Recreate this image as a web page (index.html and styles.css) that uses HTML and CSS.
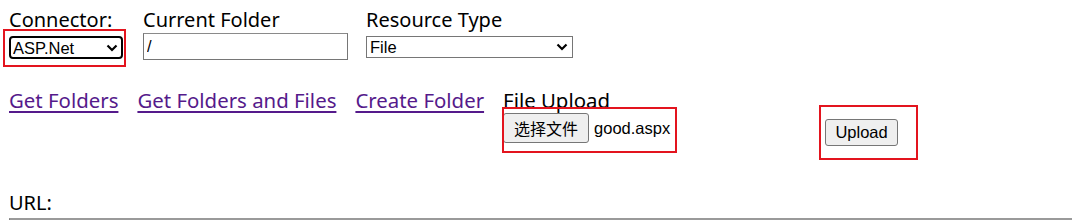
FILE: index.html
```html
<!DOCTYPE html>
<html lang="en">
<head>
    <meta charset="UTF-8">
    <title>FCKeditor - Connectors Tests</title>
    <link rel="stylesheet" href="styles.css">
</head>
<body>
<div class="page">
    <div class="row top">
        <div class="field f-conn">
            <div class="lbl">Connector:</div>
            <div class="mark mark-conn selbox">
                <select class="sel sel-conn">
                    <option>ASP.Net</option>
                </select>
                <svg class="chev" width="12" height="8" viewBox="0 0 12 8"><path d="M1.5 1.5 L6 6 L10.5 1.5" fill="none" stroke="#000" stroke-width="2.2"/></svg>
            </div>
        </div>
        <div class="field f-folder">
            <div class="lbl">Current Folder</div>
            <input class="txt" type="text" value="/">
        </div>
        <div class="field f-type">
            <div class="lbl">Resource Type</div>
            <div class="selbox">
                <select class="sel sel-type">
                    <option>File</option>
                </select>
                <svg class="chev" width="12" height="8" viewBox="0 0 12 8"><path d="M1.5 1.5 L6 6 L10.5 1.5" fill="none" stroke="#000" stroke-width="2.2"/></svg>
            </div>
        </div>
    </div>

    <div class="row actions">
        <a class="lnk" href="#">Get Folders</a>
        <a class="lnk" href="#">Get Folders and Files</a>
        <a class="lnk" href="#">Create Folder</a>
        <div class="upload">
            <div class="lbl">File Upload</div>
            <div class="mark mark-file">
                <button class="btn btn-file" type="button">选择文件</button>
                <span class="fname">good.aspx</span>
            </div>
        </div>
        <div class="mark mark-send">
            <button class="btn btn-send" type="button">Upload</button>
        </div>
    </div>

    <div class="lbl url">URL:</div>
    <textarea class="result"></textarea>
</div>
</body>
</html>
```

FILE: styles.css
```css
html, body { margin:0; padding:0; background:#fff; }
body { font-family:"Noto Sans", "Noto Sans CJK SC", sans-serif; font-size:20px; color:#000; overflow:hidden; }
.page { padding:8px 0 0 9px; }
.lbl { line-height:24px; height:24px; white-space:nowrap; }

.row { display:flex; }
.top { height:80px; }
.field { display:flex; flex-direction:column; }
.f-conn { width:114px; }
.f-folder { width:205px; margin-left:20px; }
.f-type { width:207px; margin-left:18px; }

.selbox { position:relative; margin-top:4px; }
.chev { position:absolute; right:5px; top:50%; margin-top:-4px; pointer-events:none; }
.sel { -webkit-appearance:none; appearance:none; display:block; font-family:"Liberation Sans", Arial, sans-serif; font-size:16.5px; color:#000; background:#fff; box-sizing:border-box; margin:0; }
.sel-conn { width:114px; height:23px; border:2px solid #000; border-radius:4px; padding:0 2px; }
.sel-type { width:207px; height:22px; border:1px solid #767676; border-radius:0; padding:0 3px; }
.txt { box-sizing:border-box; width:205px; height:27px; margin:1px 0 0 0; border:1px solid #767676; border-top-color:#8a8a8a; padding:0 3px; font-family:"Liberation Sans", Arial, sans-serif; font-size:16.5px; color:#000; }

.mark { position:relative; }
.mark::after { content:""; position:absolute; border:2px solid #e3141e; pointer-events:none; }
.mark-conn::after { left:-6px; right:-3px; top:-7px; bottom:-8px; }
.mark-file::after { left:-1px; right:-6px; top:-6px; bottom:-10px; }
.mark-send::after { left:-6px; right:-20px; top:-11px; bottom:-14px; }

.actions { align-items:flex-start; font-size:20.4px; }
.lnk { color:#551a8b; text-decoration:underline; text-underline-offset:3px; line-height:24px; margin-right:19px; white-space:nowrap; }
.upload { width:322px; display:flex; flex-direction:column; }
.mark-file { display:flex; align-items:center; margin-top:1px; width:168px; }
.btn { font-family:"Liberation Sans", Arial, "Noto Sans CJK SC", sans-serif; font-size:16.5px; color:#000; background:#efefef; border:1px solid #767676; border-radius:3px; margin:0; box-sizing:border-box; }
.btn-file { width:86px; height:30px; padding:0; font-family:"Noto Sans CJK SC", sans-serif; font-size:16px; }
.fname { font-family:"Liberation Sans", Arial, sans-serif; font-size:16.5px; margin-left:5px; }
.mark-send { margin-top:28px; }
.btn-send { width:73px; height:27px; padding:0; }

.url { margin-top:45px; }
.result { display:block; box-sizing:border-box; width:1100px; height:60px; margin:3px 0 0 0; border:1px solid #767676; border-top:2px solid #9a9a9a; resize:none; }
```
